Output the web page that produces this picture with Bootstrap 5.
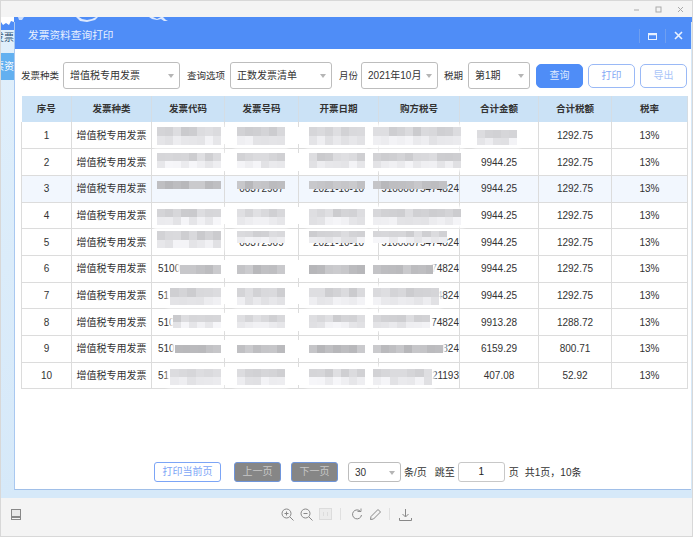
<!doctype html>
<html lang="zh"><head><meta charset="utf-8">
<link href="https://cdn.jsdelivr.net/npm/bootstrap@5.3.0/dist/css/bootstrap.min.css" rel="stylesheet">
<style>
html,body{height:100%;overflow:hidden}
body{font-family:"Liberation Sans","Noto Sans CJK SC",sans-serif;font-size:10px;color:#333;background:#f4f4f4;width:693px;height:537px}
.shell{height:537px;display:flex;flex-direction:column;border-top:1px solid #d8d8d8;border-left:1px solid #d8d8d8;border-right:1px solid #d8d8d8}
.winbar{height:16px;flex:none;display:flex;justify-content:flex-end;align-items:center;gap:15px;padding-right:8px;background:#f4f4f4}
.stage{height:481px;flex:none;background:#d6e9f9;position:relative;overflow:hidden}
.bluetop{height:5px;background:#4f8df7}
.sidenav{position:absolute;left:0;top:5px;width:13px;height:476px;background:linear-gradient(#4f8df7 8px,#e0effb 8px,#d6e9f9)}
.clouds{position:absolute;left:0;top:0}
.sideitem{position:absolute;left:0;width:13px;height:30px;line-height:30px;font-size:10px;overflow:hidden;white-space:nowrap;direction:rtl;color:#357}
.sideitem.on{background:#62b0f0;color:#fff;height:27px;line-height:27px;top:36px}
.dlg{position:absolute;left:13px;top:5px;width:677px;height:468px;background:#fff;border-left:1px solid #a9c8f0;border-bottom:1px solid #a0bfe8;display:flex;flex-direction:column}
.dlghead{height:27px;background:#4f8df7;color:#e9f1ff;font-size:10.7px;display:flex;align-items:center;padding-left:13px;flex:none}
.headico{width:26px;height:14px;display:flex;align-items:center;justify-content:center;border-left:1px solid #6f9ff0}
.filters{padding-left:6px;height:27px;margin:13px 0 7px;display:flex;align-items:center;flex:none}
.lbl{font-size:9.5px;white-space:nowrap;color:#333;padding-top:2px}
.sel{height:27px;border:1px solid #bdbdbd;border-radius:3px;background:#fff;font-size:10px;display:flex;align-items:center;padding-left:6px;position:relative;color:#333;white-space:nowrap}
.sel::after{content:"";position:absolute;right:5px;top:11px;border:3.5px solid transparent;border-top:4px solid #b5b5b5}
.act{height:24px;width:47px;border-radius:5px;border:1px solid #9ab9f6;background:#fff;color:#86a9f5;font-size:10px;padding:0;line-height:22px}
.act.pri{background:#4f8df7;color:#dfeaff;border-color:#4f8df7}
.act.dim{color:#a9c4f8}
.tblwrap{position:relative;width:666px;margin-left:6px}
.tbl{width:666px;table-layout:fixed;border-collapse:collapse;font-size:10px;color:#333}
.tbl th{height:26px;background:#cbe2f6;font-weight:700;text-align:center;font-size:9.5px;padding:0;border-right:1px solid #d5dde4;border-bottom:0;color:#333}
.tbl td{height:26.7px;padding:0;text-align:center;border:1px solid #dcdcdc;border-top:0;white-space:nowrap;overflow:hidden;background:#fff}
.tbl tr.hl td{background:#f2f7fe}
.tbl td.lt{text-align:left;padding-left:6px}
.tbl td.rt{text-align:right}
.veil{position:absolute;inset:0;pointer-events:none}
.patch{position:absolute;display:grid;overflow:hidden}
.patch.soft{box-shadow:0 0 3px 3px rgba(255,255,255,.92)}
.strip{position:absolute;width:3px}
.pager{margin-top:auto;height:34px;display:flex;align-items:center;padding-left:139px;flex:none}
.pager .lbl{font-size:10px;padding-top:0}
.outl{height:20px;width:67px;border:1px solid #7ca5f6;border-radius:3px;background:#fff;color:#7ca5f6;font-size:10px;padding:0;line-height:18px;margin-right:13px}
.grey{height:20px;width:47px;border:1px solid #6f95da;border-radius:3px;background:#868686;color:#c8c8c8;font-size:10px;padding:0;line-height:18px;margin-right:10px}
.sel.tiny{height:20px;width:53px}
.sel.tiny::after{top:8px}
.jump{height:20px;width:47px;border:1px solid #c8c8c8;border-radius:3px;text-align:center;font-size:10px;line-height:18px;color:#222}
.foot{flex:none;height:39px;position:relative;display:flex;align-items:center;justify-content:center;border-bottom:1px solid #d8d8d8;background:#f4f4f4;padding-bottom:6px}
.foot svg{display:block}
.footl{position:absolute;left:10px;top:11px}
.sep{width:1px;height:12px;background:#e0e0e0}
</style></head><body>
<div class="shell">
<div class="winbar">
<svg width="7" height="7"><path d="M1 4h5" stroke="#aaa"/></svg>
<svg width="7" height="7"><rect x="1" y="1" width="5" height="5" fill="none" stroke="#aaa"/></svg>
<svg width="7" height="7"><path d="M1 1l5 5M6 1l-5 5" stroke="#aaa"/></svg>
</div>
<div class="stage">
<div class="bluetop"></div>
<div class="sidenav"></div>
<svg class="clouds" width="180" height="9" fill="#fff"><path d="M0 0h13v5l-3-1-2 4-3-2-3 2-2-3z"/><path d="M17 0h6l-2 3h-3z" opacity=".7"/><path d="M75 0h3l3 2 5 1 5-1 4-2h2l-3 3-8 2-7-1z" opacity=".8"/><path d="M148 0h4l4 2 4-2h2l3 3 2 1h-4l-3-2-4 1-5-1z" opacity=".8"/></svg>
<div class="sideitem" style="top:6px">发票</div>
<div class="sideitem on">票资</div>
<div class="dlg">
<div class="dlghead"><span>发票资料查询打印</span>
<div class="ms-auto d-flex">
<div class="headico"><svg width="9" height="8"><rect x=".5" y="1.5" width="8" height="6" fill="none" stroke="#e9f1ff"/><path d="M0 2.5h9" stroke="#e9f1ff" stroke-width="1.5"/></svg></div>
<div class="headico"><svg width="9" height="9"><path d="M1 1l7 7M8 1l-7 7" stroke="#e9f1ff" stroke-width="1.6"/></svg></div>
</div></div>
<div class="filters">
<span class="lbl me-1">发票种类</span><div class="sel" style="width:117px">增值税专用发票</div>
<span class="lbl" style="margin:0 5px 0 7px">查询选项</span><div class="sel" style="width:102px">正数发票清单</div>
<span class="lbl" style="margin:0 3px 0 7px">月份</span><div class="sel" style="width:77px">2021年10月</div>
<span class="lbl" style="margin:0 5px 0 6px">税期</span><div class="sel" style="width:62px">第1期</div>
<button class="act pri" style="margin-left:6px">查询</button><button class="act" style="margin-left:5px">打印</button><button class="act dim" style="margin-left:5px">导出</button>
</div>
<div class="tblwrap">
<table class="tbl"><colgroup><col style="width:50px"><col style="width:80px"><col style="width:73px"><col style="width:74px"><col style="width:80px"><col style="width:81px"><col style="width:79px"><col style="width:73px"><col style="width:76px"></colgroup>
<thead><tr><th>序号</th><th>发票种类</th><th>发票代码</th><th>发票号码</th><th>开票日期</th><th>购方税号</th><th>合计金额</th><th>合计税额</th><th>税率</th></tr></thead><tbody id="b"></tbody></table>
<div class="veil" id="v"></div>
</div>
<div class="pager">
<button class="outl">打印当前页</button>
<button class="grey">上一页</button><button class="grey">下一页</button>
<div class="sel tiny">30</div><span class="lbl" style="margin-left:3px">条/页</span><span class="lbl" style="margin:0 3px 0 8px">跳至</span><div class="jump">1</div><span class="lbl" style="margin-left:4px">页</span><span class="lbl" style="margin-left:6px">共1页，10条</span>
</div>
</div>
</div>
<div class="foot">
<svg class="footl" width="11" height="12"><rect x=".5" y=".5" width="9" height="7" fill="#e8e8e8" stroke="#888"/><rect x=".5" y="8.5" width="9" height="2" fill="none" stroke="#888"/></svg>
<div class="d-flex align-items-center" style="gap:6px">
<svg width="13" height="13" fill="none" stroke="#888"><circle cx="5.5" cy="5.5" r="4.5"/><path d="M9 9l3.5 3.5M3.5 5.5h4M5.5 3.5v4"/></svg>
<svg width="13" height="13" fill="none" stroke="#888"><circle cx="5.5" cy="5.5" r="4.5"/><path d="M9 9l3.5 3.5M3.5 5.5h4"/></svg>
<svg width="13" height="13" fill="none" stroke="#dcdcdc"><rect x=".5" y=".5" width="12" height="11" fill="#ececec"/><path d="M4.5 4v4M8.5 4v4"/></svg>
<div class="sep" style="margin:0 3px 0 2px"></div>
<svg width="13" height="13" fill="none" stroke="#888"><path d="M10.5 3.5a4.5 4.5 0 1 0 1 3.5"/><path d="M7.5 3.5h3.5V0.5" stroke-width=".9"/></svg>
<svg width="13" height="13" fill="none" stroke="#888"><path d="M1.5 11.5l.5-3 7-7 2.5 2.5-7 7z"/></svg>
<div class="sep" style="margin:0 3px 0 1px"></div>
<svg width="13" height="13" fill="none" stroke="#888"><path d="M6.5 1v7.5M3.5 6l3 3 3-3M.5 10v2.5h12V10"/></svg>
</div>
</div>
</div>
<script>
const money=[["9944.25","1292.75"],["9944.25","1292.75"],["9944.25","1292.75"],["9944.25","1292.75"],["9944.25","1292.75"],["9944.25","1292.75"],["9944.25","1292.75"],["9913.28","1288.72"],["6159.29","800.71"],["407.08","52.92"]];
const code=["","","","","","5100","51","510","510","51"];
const num=["","","00372907","","00372909","","","","",""];
const date=["","","2021-10-10","","2021-10-10","","","","",""];
const tax=["","","91000075474824","","91000075474824","74824","4824","74824","824","21193"];
let h="";
money.forEach((r,i)=>{h+=`<tr class="${i==2?'hl':''}"><td>${i+1}</td><td>增值税专用发票</td><td class="lt">${code[i]}</td><td>${num[i]}</td><td>${date[i]}</td><td class="rt">${tax[i]}</td><td>${r[0]}</td><td>${r[1]}</td><td>13%</td></tr>`});
document.getElementById("b").innerHTML=h;
/* mosaic patches: [y top, y bottom, code start, tax end, tier] in page pixels; tier 3 = thin band that leaves the digits' lower half showing */
const P=[[127,145,157,461,0],[153,168,157,461,0],[181,189,157,447,3],[209,225,157,461,0],[231,243,157,447,4],[265,274,180,433,2],[288,305,170,439,0],[315,328,173,430,0],[345,353,175,443,2],[369,385,170,432,0]];
const lines=[148,175,202,228,255,282,308,335,362,389];
let seed=7;const rnd=()=>(seed=(seed*73+41)%101)/101;
const veil=document.getElementById("v");
function patch(x,y,w,h,tier){
 const d=document.createElement("div");d.className="patch"+(tier<3?" soft":"");
 const cols=Math.max(1,Math.round(w/8)),rows=(tier==2||tier==3)?1:2;
 d.style.cssText=`left:${x-21}px;top:${y-96}px;width:${w}px;height:${h}px;grid-template-columns:repeat(${cols},1fr);grid-template-rows:repeat(${rows},1fr)`;
 for(let r=0;r<rows;r++)for(let c=0;c<cols;c++){
  const base=(tier==2||tier==3)?188:(r==0?208:230),v=Math.round(base+rnd()*22-6);
  const e=document.createElement("span");e.style.background=`rgb(${v},${v},${v+3})`;d.appendChild(e);
 }
 veil.appendChild(d);
}
P.forEach((p,i)=>{
 const [t,b,a,e,k]=p,hh=b-t,bg=i==2?"#f2f7fe":"#fff",top=i?lines[i-1]:122;
 if(k<3)[223,297,377].forEach(x=>{const s=document.createElement("div");s.className="strip";s.style.cssText=`left:${x-21}px;top:${top+5-96}px;height:${lines[i]-top-9}px;background:${bg}`;veil.appendChild(s)});
 patch(a,t,221-a,(k==4?b+5:b)-t,k==4?0:k);patch(237,t,48,hh,k);patch(309,t,56,hh,k);patch(373,t,e-373,hh,k);
 if(i==0)patch(477,t+3,40,hh-3,0);
});
</script>
<script src="https://cdn.jsdelivr.net/npm/bootstrap@5.3.0/dist/js/bootstrap.bundle.min.js"></script>
</body></html>
